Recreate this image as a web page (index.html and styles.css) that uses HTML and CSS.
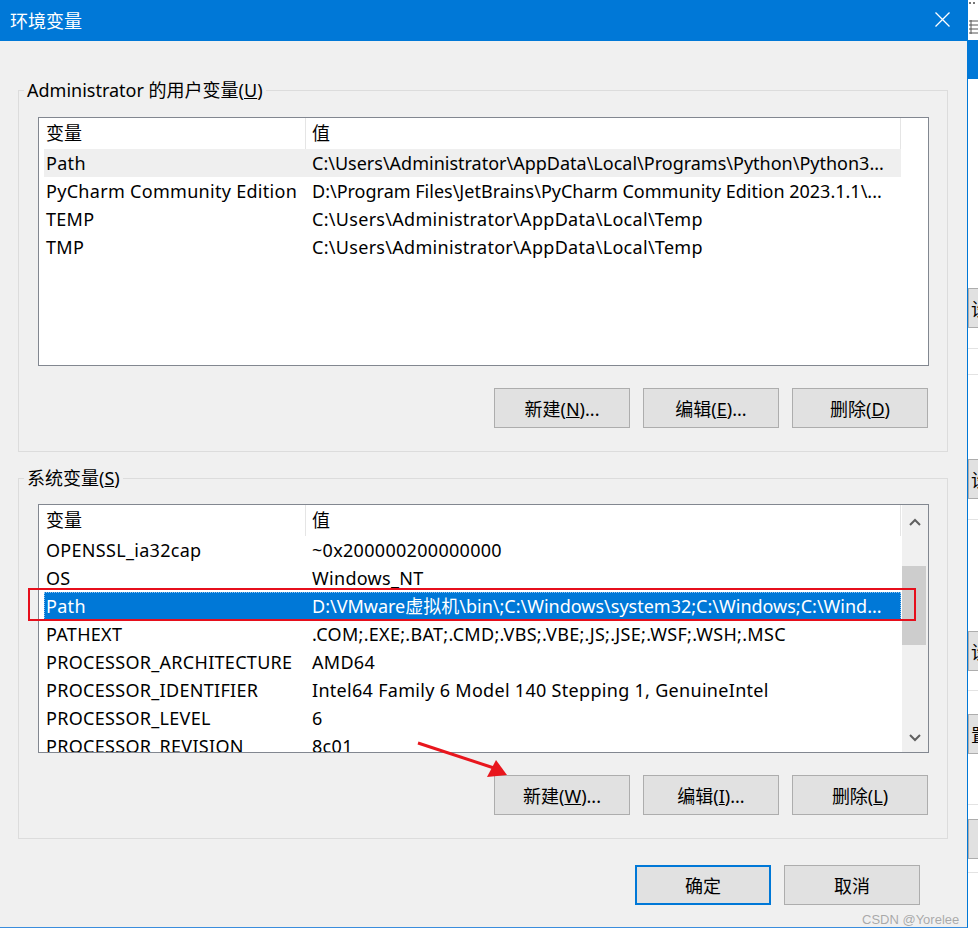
FILE: index.html
```html
<!DOCTYPE html>
<html lang="zh-CN">
<head>
  <meta charset="UTF-8" />
  <title>环境变量</title>
  <link rel="stylesheet" href="styles.css">
</head>
<body>

  <!-- Dialog window -->
  <div class="window">
    <div class="titlebar">
      <span class="title">环境变量</span>
      <svg class="close" width="15" height="15" viewBox="0 0 15 15">
        <path d="M0.5 0.5 L14.5 14.5 M14.5 0.5 L0.5 14.5" stroke="#fff" stroke-width="1.3" fill="none"/>
      </svg>
    </div>

    <!-- User variables -->
    <fieldset class="group group-user">
      <legend>Administrator 的用户变量(<u>U</u>)</legend>
      <div class="list">
        <div class="list-main">
          <div class="list-head">
            <div class="col1">变量</div>
            <div class="col2">值</div>
          </div>
          <div class="row hover">
            <div class="col1">Path</div>
            <div class="col2 tight">C:\Users\Administrator\AppData\Local\Programs\Python\Python3...</div>
          </div>
          <div class="row">
            <div class="col1">PyCharm Community Edition</div>
            <div class="col2 tight">D:\Program Files\JetBrains\PyCharm Community Edition 2023.1.1\...</div>
          </div>
          <div class="row">
            <div class="col1">TEMP</div>
            <div class="col2">C:\Users\Administrator\AppData\Local\Temp</div>
          </div>
          <div class="row">
            <div class="col1">TMP</div>
            <div class="col2">C:\Users\Administrator\AppData\Local\Temp</div>
          </div>
        </div>
      </div>
      <div class="btn-row">
        <button class="btn">新建(<u>N</u>)...</button>
        <button class="btn">编辑(<u>E</u>)...</button>
        <button class="btn">删除(<u>D</u>)</button>
      </div>
    </fieldset>

    <!-- System variables -->
    <fieldset class="group group-sys">
      <legend>系统变量(<u>S</u>)</legend>
      <div class="list">
        <div class="list-main">
          <div class="list-head">
            <div class="col1">变量</div>
            <div class="col2">值</div>
          </div>
          <div class="row">
            <div class="col1">OPENSSL_ia32cap</div>
            <div class="col2">~0x200000200000000</div>
          </div>
          <div class="row">
            <div class="col1">OS</div>
            <div class="col2">Windows_NT</div>
          </div>
          <div class="row selected">
            <div class="col1">Path</div>
            <div class="col2 tight">D:\VMware虚拟机\bin\;C:\Windows\system32;C:\Windows;C:\Wind...</div>
          </div>
          <div class="row">
            <div class="col1">PATHEXT</div>
            <div class="col2">.COM;.EXE;.BAT;.CMD;.VBS;.VBE;.JS;.JSE;.WSF;.WSH;.MSC</div>
          </div>
          <div class="row">
            <div class="col1">PROCESSOR_ARCHITECTURE</div>
            <div class="col2">AMD64</div>
          </div>
          <div class="row">
            <div class="col1">PROCESSOR_IDENTIFIER</div>
            <div class="col2">Intel64 Family 6 Model 140 Stepping 1, GenuineIntel</div>
          </div>
          <div class="row">
            <div class="col1">PROCESSOR_LEVEL</div>
            <div class="col2">6</div>
          </div>
          <div class="row">
            <div class="col1">PROCESSOR_REVISION</div>
            <div class="col2">8c01</div>
          </div>
        </div>
        <div class="scrollbar">
          <div class="sb-btn">
            <svg width="12" height="8" viewBox="0 0 12 8"><polyline points="1,7 6,2 11,7" fill="none" stroke="#606060" stroke-width="2"/></svg>
          </div>
          <div class="sb-track"><div class="sb-thumb"></div></div>
          <div class="sb-btn sb-down">
            <svg width="12" height="8" viewBox="0 0 12 8"><polyline points="1,1 6,6 11,1" fill="none" stroke="#606060" stroke-width="2"/></svg>
          </div>
        </div>
      </div>
      <div class="btn-row">
        <button class="btn">新建(<u>W</u>)...</button>
        <button class="btn">编辑(<u>I</u>)...</button>
        <button class="btn">删除(<u>L</u>)</button>
      </div>
    </fieldset>

    <div class="footer">
      <button class="btn btn-default">确定</button>
      <button class="btn">取消</button>
    </div>
  </div>

  <!-- Window behind, right edge -->
  <div class="side">
    <div class="side-top">
      <svg width="10" height="40" viewBox="0 0 10 40">
        <rect x="1" y="2" width="2" height="2" fill="#777"/>
        <rect x="5" y="2" width="2" height="2" fill="#777"/>
        <path d="M1 21 H10 M1 25 H10 M1 29 H10 M1 33 H10 M3 20 V34" stroke="#555" stroke-width="1" fill="none"/>
      </svg>
    </div>
    <div class="side-blue"></div>
    <div class="side-btn s1">设</div>
    <div class="side-line l1"></div>
    <div class="side-line l2"></div>
    <div class="side-btn s2">设</div>
    <div class="side-line l3"></div>
    <div class="side-btn s3">设</div>
    <div class="side-line l4"></div>
    <div class="side-btn s4">置</div>
    <div class="side-line l5"></div>
    <div class="side-btn s5"></div>
    <div class="side-line l6"></div>
  </div>

  <!-- Annotations drawn over the screenshot -->
  <div class="mark-box"></div>
  <svg class="mark-arrow" width="978" height="938" viewBox="0 0 978 938">
    <line x1="418" y1="743" x2="494" y2="768" stroke="#e8161d" stroke-width="3"/>
    <polygon points="507,775 487,777 496,760" fill="#e8161d"/>
  </svg>
  <div class="watermark">CSDN @Yorelee</div>

</body>
</html>
```

FILE: styles.css
```css
* {
  box-sizing: border-box;
}

body {
  margin: 0;
  width: 978px;
  height: 938px;
  overflow: hidden;
  position: relative;
  display: flex;
  align-items: flex-start;
  background-color: #fff;
  font-family: "Noto Sans", "Noto Sans CJK SC", sans-serif;
  font-size: 18px;
  color: #000;
}

/* Dialog */
.window {
  width: 968px;
  height: 928px;
  background-color: #f0f0f0;
  border-right: 1px solid #0078d7;
  border-bottom: 1px solid #3a8ddd;
  display: flex;
  flex-direction: column;
}

.titlebar {
  height: 41px;
  flex-shrink: 0;
  background-color: #0078d7;
  color: #fff;
  display: flex;
  align-items: center;
  justify-content: space-between;
  padding: 0 17px 0 10px;
}

.title {
  font-family: "Noto Sans CJK SC", sans-serif;
  font-size: 18px;
  line-height: 24px;
  margin-top: -2px;
}

.close {
  margin-top: -3px;
}

/* Group boxes */
.group {
  border: 1px solid #dcdcdc;
  margin: 0 19px 0 18px;
  padding: 0 18px 23px 5px;
  min-inline-size: 0;
}

.group legend {
  padding: 0 3px;
  font-size: 18px;
  line-height: 24px;
}

.group-user {
  margin-top: 37px;
  padding-top: 15px;
}

.group-sys {
  margin-top: 14px;
  padding-top: 14px;
}

/* List view */
.list {
  margin-left: 14px;
  height: 249px;
  background-color: #fff;
  border: 1px solid #828790;
  display: flex;
  overflow: hidden;
}

.list-main {
  width: 863px;
  overflow: hidden;
}

.list-head {
  height: 31px;
  display: flex;
  line-height: 31px;
}

.list-head .col1 {
  width: 267px;
  padding-left: 7px;
  border-right: 1px solid #e5e5e5;
}

.list-head .col2 {
  width: 595px;
  padding-left: 6px;
  border-right: 1px solid #e5e5e5;
}

.row {
  margin-left: 5px;
  width: 857px;
  height: 28px;
  line-height: 28px;
  display: flex;
  white-space: nowrap;
  letter-spacing: 0.3px;
}

.row .col1 {
  width: 261px;
  padding-left: 2px;
  overflow: hidden;
}

.row .col2 {
  width: 596px;
  padding-left: 7px;
  padding-right: 2px;
  overflow: hidden;
  text-overflow: ellipsis;
}

.row .tight {
  letter-spacing: 0;
}

.row.hover {
  background-color: #efefef;
}

.row.selected {
  background-color: #0078d7;
  color: #fff;
  outline: 1px dotted #8fc3ee;
  outline-offset: -1px;
}

/* Scrollbar */
.scrollbar {
  width: 26px;
  background-color: #f0f0f0;
  display: flex;
  flex-direction: column;
}

.sb-btn {
  height: 33px;
  display: flex;
  align-items: center;
  justify-content: center;
}

.sb-down {
  padding-top: 4px;
}

.sb-track {
  flex: 1;
}

.sb-thumb {
  margin-top: 28px;
  width: 24px;
  height: 79px;
  background-color: #cdcdcd;
}

/* Buttons */
.btn-row {
  display: flex;
  justify-content: flex-end;
  gap: 13px;
  margin-top: 22px;
  margin-right: 1px;
}

.btn {
  width: 136px;
  height: 40px;
  padding: 0;
  background-color: #e1e1e1;
  border: 1px solid #adadad;
  font-family: "Noto Sans", "Noto Sans CJK SC", sans-serif;
  font-size: 18px;
  color: #000;
}

.btn-default {
  border: 2px solid #0078d7;
}

.footer {
  display: flex;
  justify-content: flex-end;
  gap: 13px;
  margin-top: 26px;
  padding-right: 47px;
}

/* Window behind the dialog */
.side {
  flex: 1;
  display: flex;
  flex-direction: column;
  overflow: hidden;
}

.side-top {
  height: 40px;
}

.side-blue {
  height: 39px;
  background-color: #0078d7;
}

.side-btn {
  height: 40px;
  background-color: #e1e1e1;
  border: 1px solid #adadad;
  border-right: none;
  padding-left: 2px;
  font-family: "Noto Sans CJK SC", sans-serif;
  font-size: 18px;
  line-height: 38px;
  white-space: nowrap;
}

.side-line {
  height: 1px;
  background-color: #e3e3e3;
}

.s1 { margin-top: 209px; }
.l1 { margin-top: 20px; }
.l2 { margin-top: 25px; }
.s2 { margin-top: 84px; }
.l3 { margin-top: 20px; }
.s3 { margin-top: 111px; }
.l4 { margin-top: 19px; }
.s4 { margin-top: 23px; }
.l5 { margin-top: 50px; }
.s5 { margin-top: 14px; }
.l6 { margin-top: 13px; }

/* Annotations */
.mark-box {
  position: absolute;
  left: 28px;
  top: 588px;
  width: 888px;
  height: 33px;
  border: 2px solid #e60f1c;
}

.mark-arrow {
  position: absolute;
  left: 0;
  top: 0;
  pointer-events: none;
}

.watermark {
  position: absolute;
  left: 862px;
  top: 912px;
  font-family: "Liberation Sans", sans-serif;
  font-size: 13px;
  color: rgba(120, 120, 120, 0.6);
}
```
